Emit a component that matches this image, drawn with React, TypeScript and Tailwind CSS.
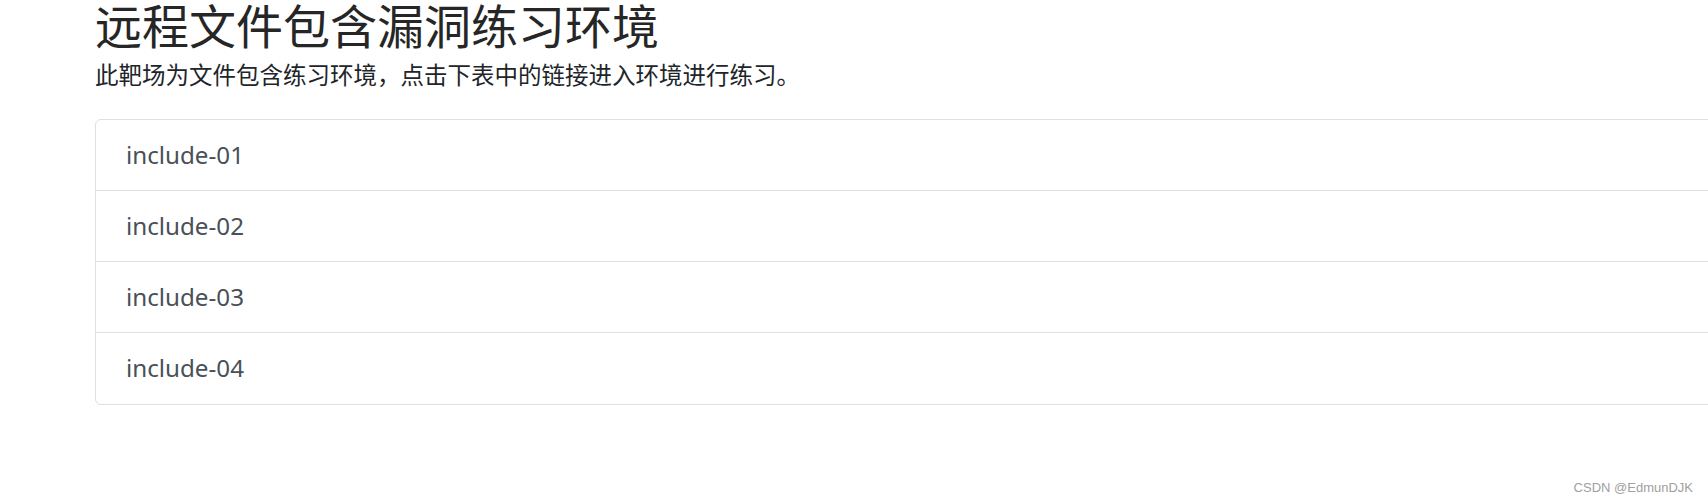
const items = ['include-01', 'include-02', 'include-03', 'include-04']

const font = { fontFamily: '"Noto Sans", "Noto Sans CJK SC", sans-serif' }

export default function App() {
  return (
    <div className="relative h-[504px] w-[1708px] overflow-hidden bg-white" style={font}>
      <div className="pl-[95px]">
        {/* Heading */}
        <h1 className="mt-[1px] text-[47px] leading-[50px] font-normal text-[#262626]">
          远程文件包含漏洞练习环境
        </h1>
        <p className="mt-[6px] text-[23.5px] leading-[36px] text-[#212529]">
          此靶场为文件包含练习环境，点击下表中的链接进入环境进行练习。
        </p>

        {/* List group */}
        <ul className="mt-[26px] w-[1640px] rounded-[6px] border border-[#dfdfdf]">
          {items.map((item, index) => (
            <li
              key={item}
              className={`flex h-[71px] items-center px-[30px] text-[24.2px] text-[#495057] ${
                index < items.length - 1 ? 'border-b border-[#dfdfdf]' : ''
              }`}
            >
              {item}
            </li>
          ))}
        </ul>
      </div>

      {/* Watermark */}
      <div
        className="absolute right-[15px] bottom-[7px] text-[13px] text-[#a0a0a0]"
        style={{ fontFamily: '"Liberation Sans", Arial, sans-serif' }}
      >
        CSDN @EdmunDJK
      </div>
    </div>
  )
}
